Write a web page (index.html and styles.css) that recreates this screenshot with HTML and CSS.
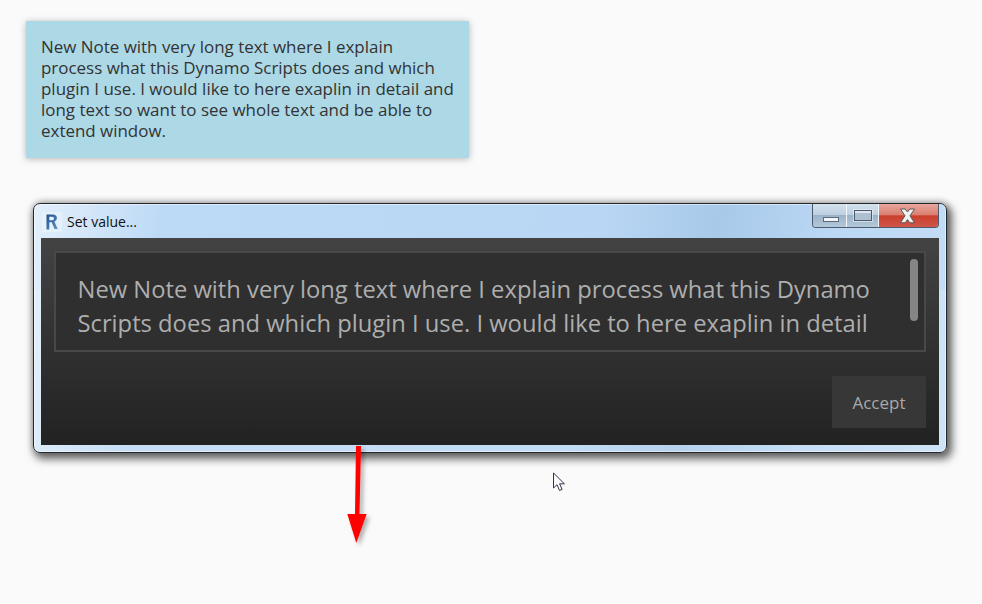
FILE: index.html
```html
<!DOCTYPE html>
<html lang="en">
<head>
<meta charset="utf-8">
<title>Set value...</title>
<link rel="stylesheet" href="styles.css">
</head>
<body>
<div class="note">New Note with very long text where I explain<br>process what this Dynamo Scripts does and which<br>plugin I use. I would like to here exaplin in detail and<br>long text so want to see whole text and be able to<br>extend window.</div>
<section class="window">
  <header class="titlebar">
    <svg class="app-icon" width="20" height="20" viewBox="0 0 20 20">
      <defs><linearGradient id="r" x1="0" y1="0" x2="1" y2="1"><stop offset="0" stop-color="#1f4f8c"/><stop offset="1" stop-color="#5f92c4"/></linearGradient></defs>
      <rect width="20" height="20" fill="#eef6fd" fill-opacity=".5"/>
      <path d="M4.500 2.500h6.300c2.600 0 4.100 1.400 4.100 3.600 0 1.800-1 3-2.500 3.500l3.300 7.400h-3.200l-2.800-6.700H7.300V17.500H4.500z M7.300 4.800v3.400h2.900c1.100 0 1.800-.7 1.800-1.700s-.7-1.700-1.800-1.700z" fill="url(#r)" fill-rule="evenodd"/>
    </svg>
    <span class="title">Set value...</span>
    <div class="controls">
      <div class="ctl ctl-min"><span class="min-glyph"></span></div>
      <div class="ctl ctl-max"><span class="max-glyph"></span></div>
      <div class="ctl ctl-close"><svg width="17" height="16" viewBox="0 0 17 16"><path d="M1.500 1h4.700l2.300 3 2.300-3h4.700l-4.500 6.800 4.500 7h-4.700l-2.300-3.200-2.300 3.200H1.500l4.500-7z" fill="#f2f2f2" stroke="#5a5a5a" stroke-width="1"/></svg></div>
    </div>
  </header>
  <div class="content">
    <div class="textbox">
      <p class="textbox-text">New Note with very long text where I explain process what this Dynamo<br>Scripts does and which plugin I use. I would like to here exaplin in detail</p>
      <div class="scrollthumb"></div>
    </div>
    <div class="actions"><button class="accept" type="button">Accept</button></div>
  </div>
</section>
<svg class="arrow" width="40" height="115" viewBox="0 0 40 115">
  <defs><filter id="s" x="-30%" y="-10%" width="180%" height="130%"><feDropShadow dx="3" dy="3" stdDeviation="2" flood-color="#000" flood-opacity=".3"/></filter></defs>
  <path d="M18 11h5l-1.500 68h7.200L18.300 108 9.300 79h7.700z" fill="#ff0000" filter="url(#s)"/>
</svg>
<svg class="cursor" width="14" height="20" viewBox="0 0 14 20"><path d="M1.500 1v15l3.500-3.300 2.500 5.800 2.600-1.100-2.500-5.600h4.800z" fill="#fafafa" stroke="#30354a" stroke-width="1"/></svg>
</body>
</html>
```
FILE: styles.css
```css
* { box-sizing: border-box; }
html, body { margin: 0; height: 100%; overflow: hidden; }
body {
  background: #fafafa;
  font-family: "Open Sans", "Noto Sans", sans-serif;
  padding: 21px 0 0 26px;
  position: relative;
}
.note {
  width: 443px;
  height: 137px;
  padding: 15px 15px;
  background: #add8e6;
  color: #333;
  font-size: 16.950px;
  line-height: 21px;
  white-space: nowrap;
  box-shadow: 0 1px 7px rgba(0,0,0,.28);
}
.window {
  width: 914px;
  height: 250px;
  margin: 45px 0 0 7px;
  display: flex;
  flex-direction: column;
  padding: 0 7px 7px;
  border: 1px solid #24282c;
  border-radius: 7px;
  background:
    linear-gradient(transparent 0, transparent 86px, rgba(255,255,255,.15) 86px),
    linear-gradient(100deg, #e2effb 0%, #d3e6f8 6%, #bcd9f5 14%, #b9d6f4 60%, #a8c9e9 72%, #bbd8f5 84%, #c6def5 100%);
  box-shadow: 3px 4px 9px 2px rgba(0,0,0,.6), 0 -1px 7px rgba(0,0,0,.2), inset 0 0 0 1px rgba(255,255,255,.5);
}
.titlebar {
  height: 34px;
  flex: none;
  display: flex;
  align-items: center;
  margin-left: 1px;
  gap: 5px;
}
.app-icon { width: 20px; height: 20px; flex: none; margin-top: 2px; }
.title { font-size: 14px; color: #111; margin-top: 1px; }
.controls {
  margin-left: auto;
  align-self: flex-start;
  display: flex;
  height: 24px;
  border: 1px solid #4c5a6b;
  border-top: 0;
  border-radius: 0 0 4px 4px;
  overflow: hidden;
}
.ctl { display: flex; align-items: center; justify-content: center; flex: none; }
.ctl-min {
  width: 34px;
  border-right: 1px solid #f2f6fa;
  background: linear-gradient(#d3e1ee 0%, #bccfe0 48%, #9bb3c9 50%, #b3c8da 100%);
  align-items: flex-end;
  padding-bottom: 5px;
  padding-left: 2px;
}
.ctl-max {
  width: 32px;
  border-right: 1px solid #f2f6fa;
  background: linear-gradient(#d3e1ee 0%, #bccfe0 48%, #9bb3c9 50%, #b3c8da 100%);
}
.ctl-close {
  width: 59px;
  background: linear-gradient(#e8a79c 0%, #d98072 46%, #c9402c 52%, #d0564a 100%);
}
.ctl-close svg { margin-right: 2px; }
.min-glyph { width: 16px; height: 5px; background: #f4f6f8; border: 1px solid #5a6a7a; }
.max-glyph { width: 18px; height: 11px; background: #aebfcf; border: 1px solid #4c5a6b; box-shadow: 0 0 0 1px rgba(238,243,247,.6), inset 0 2px 0 #dde6ee; }
.content {
  flex: 1;
  min-height: 0;
  padding: 13px 13px 17px;
  background: linear-gradient(#434343 0%, #303030 55%, #222 100%);
  display: flex;
  flex-direction: column;
}
.textbox {
  height: 101px;
  flex: none;
  background: #2f2f2f;
  border: 2px solid #484848;
  position: relative;
  padding: 19px 21.500px;
  overflow: hidden;
}
.textbox-text {
  margin: 0;
  color: #aeaeae;
  font-size: 23.750px;
  line-height: 34px;
  white-space: nowrap;
}
.scrollthumb {
  position: absolute;
  top: 6px;
  right: 6px;
  width: 8px;
  height: 62px;
  border-radius: 4px;
  background: #858585;
}
.actions { margin-top: auto; display: flex; justify-content: flex-end; }
.accept {
  width: 94px;
  height: 52px;
  border: 0;
  background: #373737;
  color: #a9a9a9;
  font: 17px "Open Sans", "Noto Sans", sans-serif;
}
.arrow { position: absolute; left: 338px; top: 435px; }
.cursor { position: absolute; left: 552px; top: 472px; }
```
